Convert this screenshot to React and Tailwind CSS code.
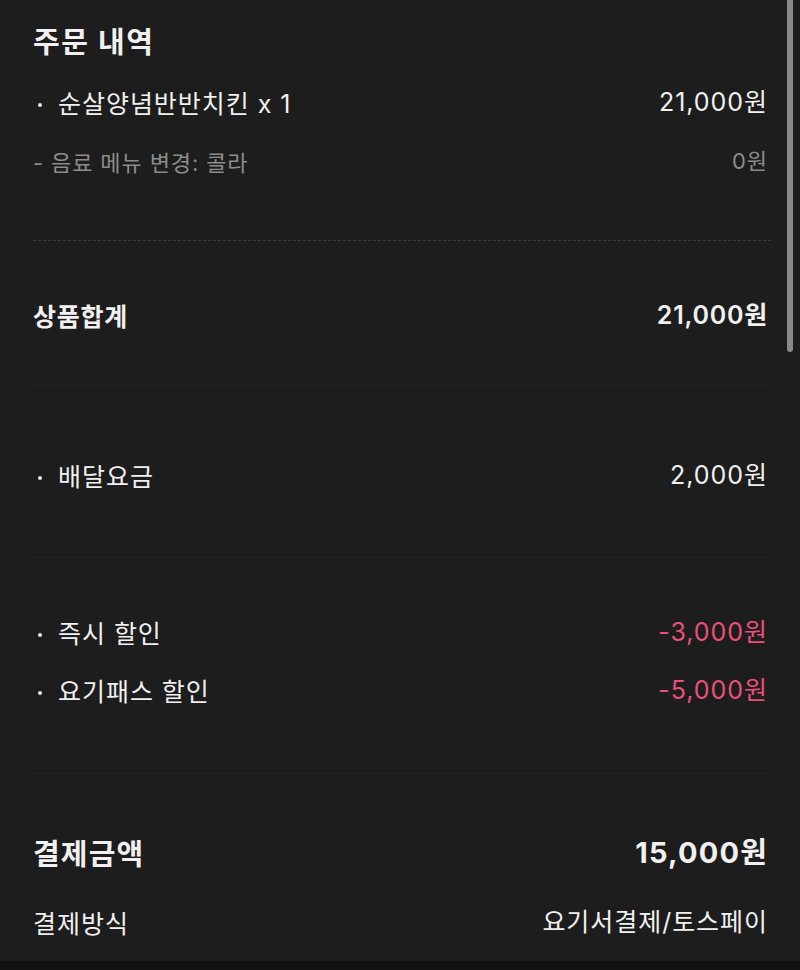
import React from 'react';

const font = { fontFamily: '"Inter", "Noto Sans CJK KR", sans-serif' };

const Bullet = () => (
  <span className="flex w-[25px] shrink-0 items-center pl-[5px]">
    <span className="h-[4px] w-[4px] rounded-full bg-[#e6e6e6]" />
  </span>
);

const Row = ({ label, value, bullet, className = '', valueClass = '' }) => (
  <div className={`flex h-[32px] items-center justify-between ${className}`}>
    <div className="flex items-center">
      {bullet && <Bullet />}
      <span>{label}</span>
    </div>
    <span className={`-mt-[4px] ${valueClass}`}>{value}</span>
  </div>
);

const Line = ({ className = '' }) => <div className={`mr-[-3px] h-px bg-[#232323] ${className}`} />;

export default function App() {
  return (
    <div style={font} className="relative flex h-[970px] w-[800px] flex-col overflow-hidden bg-[#1d1d1d] text-[#f0f0f0]">
      {/* scrollbar */}
      <div className="absolute right-[7px] top-0 h-[352px] w-[6px] rounded-b-full bg-[#8a8a8a]" />

      <div className="flex flex-1 flex-col pl-[33px] pr-[32px] pt-[25px] tracking-[0.06em]">
        {/* 주문 내역 */}
        <h2 className="h-[36px] text-[29px] font-semibold leading-[36px] tracking-[0.05em]">주문 내역</h2>

        <Row className="mt-[28px] text-[25px]" bullet label="순살양념반반치킨 x 1" value="21,000원" />

        <div className="mt-[27px] flex h-[30px] items-center justify-between text-[22px] tracking-[0.04em] text-[#8c8c8c]">
          <span>- 음료 메뉴 변경: 콜라</span>
          <span className="-mt-[4px]">0원</span>
        </div>

        <div className="mr-[-3px] mt-[62px] h-px bg-[repeating-linear-gradient(90deg,#383838_0_3px,transparent_3px_5px)]" />

        {/* 상품합계 */}
        <Row className="mt-[61px] text-[25px] font-semibold tracking-[0.03em]" label="상품합계" value="21,000원" />

        <Line className="mt-[51px]" />

        <Row className="mt-[76px] text-[25px]" bullet label="배달요금" value="2,000원" />

        <Line className="mt-[63px]" />

        {/* 할인 */}
        <Row className="mt-[61px] text-[25px]" bullet label="즉시 할인" value="-3,000원" valueClass="text-[#e9507a]" />
        <Row className="mt-[26px] text-[25px]" bullet label="요기패스 할인" value="-5,000원" valueClass="text-[#e9507a]" />

        <Line className="mt-[64px]" />

        {/* 결제금액 */}
        <div className="mt-[63px] flex h-[36px] items-center justify-between text-[29px] font-bold tracking-[0.04em]">
          <span>결제금액</span>
          <span className="-mt-[4px]">15,000원</span>
        </div>

        <Row className="mt-[36px] text-[25px]" label="결제방식" value="요기서결제/토스페이" />
      </div>

      <div className="h-[9px] bg-[#111111]" />
    </div>
  );
}
